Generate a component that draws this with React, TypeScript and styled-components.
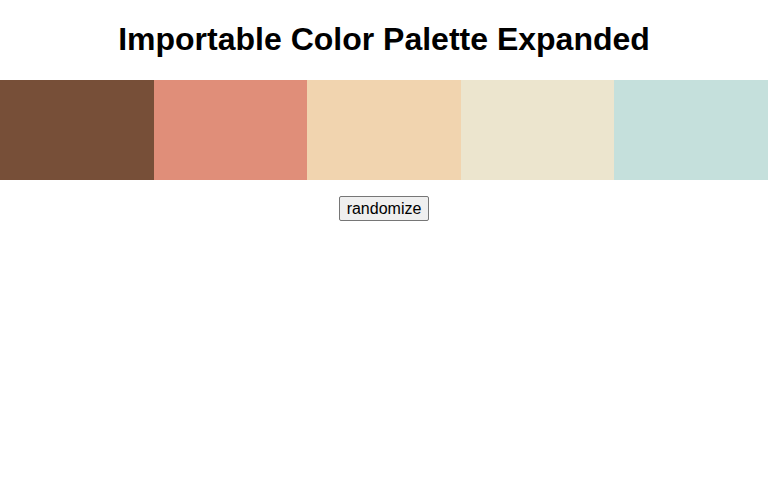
import React, { useState } from "react";
import styled, { createGlobalStyle } from "styled-components";

const GlobalStyle = createGlobalStyle`
  html, body {
    margin: 0;
    padding: 0;
    background: #ffffff;
    font-family: "Liberation Sans", Arial, sans-serif;
  }
`;

const Page = styled.div`
  display: flex;
  flex-direction: column;
  align-items: stretch;
`;

const Title = styled.h1`
  margin: 21.44px 0;
  font-size: 32px;
  font-weight: bold;
  text-align: center;
  color: #000;
`;

const Strip = styled.div`
  display: flex;
  height: 100px;
`;

const Swatch = styled.div<{ $color: string }>`
  flex: 1;
  background: ${(p) => p.$color};
`;

const Controls = styled.div`
  display: flex;
  justify-content: center;
  margin-top: 16px;
`;

const Button = styled.button`
  font-family: "Liberation Sans", Arial, sans-serif;
  font-size: 16px;
  line-height: 19px;
  padding: 2px 7px;
  color: #000;
  background: #efefef;
  border: 1px solid #767676;
  border-radius: 2px;
  cursor: pointer;
`;

const initial = ["#774F38", "#E08E79", "#F1D4AF", "#ECE5CE", "#C5E0DC"];

export default function App() {
  const [colors, setColors] = useState(initial);
  const randomize = () => {
    setColors((c) => [...c].sort(() => Math.random() - 0.5));
  };
  return (
    <Page>
      <GlobalStyle />
      <Title>Importable Color Palette Expanded</Title>
      <Strip>
        {colors.map((c, i) => (
          <Swatch key={i} $color={c} />
        ))}
      </Strip>
      <Controls>
        <Button onClick={randomize}>randomize</Button>
      </Controls>
    </Page>
  );
}
